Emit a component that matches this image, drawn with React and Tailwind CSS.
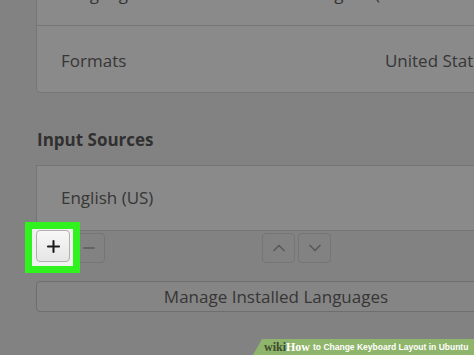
import { Plus, Minus, ChevronUp, ChevronDown } from "lucide-react";

const font = { fontFamily: '"Open Sans", "Noto Sans", sans-serif' };

function Row({ label, value, last }) {
  return (
    <div
      className={
        "flex h-[66px] items-center justify-between pl-[24px] pr-[24px] pt-[3px] whitespace-nowrap " +
        (last ? "" : "border-b border-[#767575]")
      }
    >
      <span>{label}</span>
      <span>{value}</span>
    </div>
  );
}

function ToolButton({ children }) {
  return (
    <div className="flex h-[30px] w-[33px] items-center justify-center rounded-[4px] border border-[#767575] text-[#5a5959]">
      {children}
    </div>
  );
}

export default function App() {
  return (
    <div
      className="relative h-[355px] w-[474px] overflow-hidden bg-[#838282] text-[17px] text-[#363636]"
      style={font}
    >
      <div className="ml-[36px] w-[480px]">
        {/* region & language list */}
        <div className="-mt-[41px] rounded-b-[4px] border border-[#767575] bg-[#8a8a8a]">
          <Row label="Language" value="English (United States)" />
          <Row label="Formats" value="United States" last />
        </div>

        <h2 className="mt-[34px] pl-[1px] text-[17px] font-bold leading-[26px] text-[#303030]">
          Input Sources
        </h2>

        {/* input sources list */}
        <div className="mt-[12px] border-l border-t border-[#767575] bg-[#8a8a8a]">
          <div className="flex h-[64px] items-center pl-[24px]">English (US)</div>
        </div>
        <div className="flex h-[37px] items-start border-t border-[#767575]">
          <div className="relative h-[32px] w-[34px]">
            <div className="absolute -left-[11px] -top-[9px] z-10 h-[51px] w-[55px] border-[7px] border-[#2ff21e] bg-[#f1f1f1]">
              <div className="ml-[4px] mt-[1px] flex h-[32px] w-[34px] items-center justify-center rounded-[4px] border border-[#b0b0b0] bg-gradient-to-b from-[#f7f7f7] to-[#e6e6e6] text-[#1c1c1c]">
                <Plus size={19} strokeWidth={2.6} />
              </div>
            </div>
          </div>
          <div className="ml-[2px] mt-[2px]">
            <ToolButton>
              <Minus size={18} strokeWidth={1.8} />
            </ToolButton>
          </div>
          <div className="ml-[157px] mt-[2px] flex gap-[3px]">
            <ToolButton>
              <ChevronUp size={20} strokeWidth={2} />
            </ToolButton>
            <ToolButton>
              <ChevronDown size={20} strokeWidth={2} />
            </ToolButton>
          </div>
        </div>

        <button className="mt-[14px] flex h-[31px] w-[480px] items-center justify-center rounded-[4px] border border-[#6f6e6e] bg-[#868585] text-[17px] text-[#363636]">
          Manage Installed Languages
        </button>
      </div>

      {/* watermark */}
      <div className="absolute bottom-0 right-0 flex h-[16px] w-[221px] items-center whitespace-nowrap bg-[#8fb46b] pl-[11px] font-bold leading-none text-white [clip-path:polygon(9px_0,100%_0,100%_100%,0_100%)]">
        <span className="text-[12px] text-[#3e4b2e]" style={{ fontFamily: '"Liberation Serif", serif' }}>
          wiki
        </span>
        <span className="text-[12px]" style={{ fontFamily: '"Liberation Serif", serif' }}>
          How
        </span>
        <span className="ml-[3px] text-[8.5px]" style={{ fontFamily: '"Liberation Sans", Arial, sans-serif' }}>
          to Change Keyboard Layout in Ubuntu
        </span>
      </div>
    </div>
  );
}
